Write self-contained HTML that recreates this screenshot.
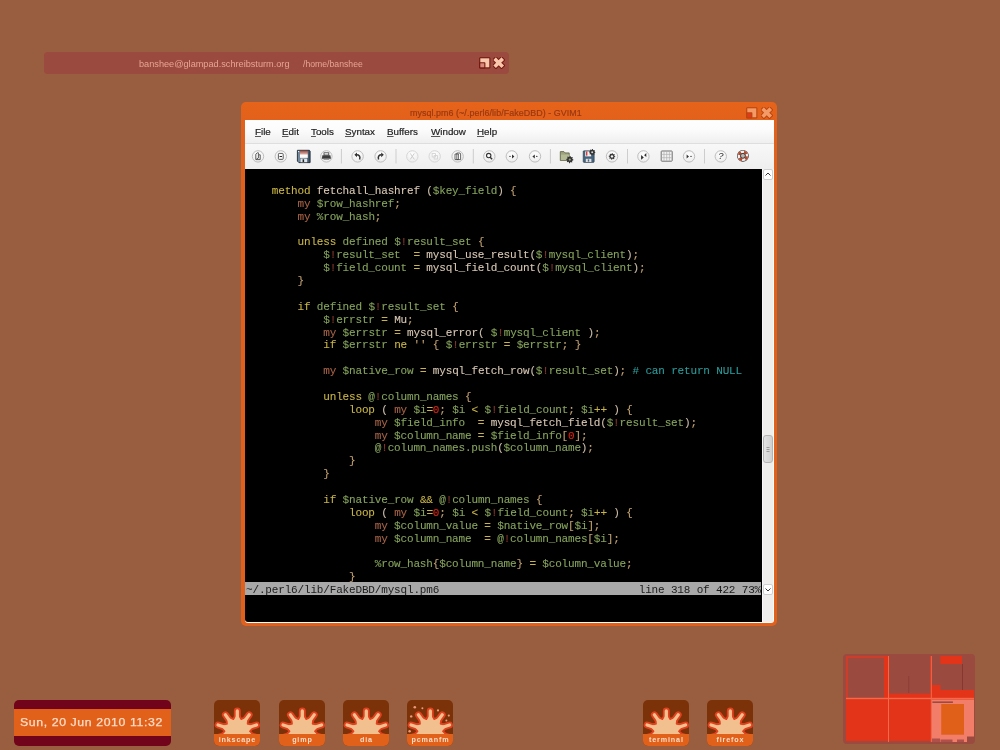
<!DOCTYPE html>
<html><head><meta charset="utf-8">
<style>
*{margin:0;padding:0;box-sizing:border-box}
html,body{width:1000px;height:750px;overflow:hidden;background:#995d3f;font-family:"Liberation Sans",sans-serif;position:relative}
.a{position:absolute}
#topbar{left:43.5px;top:52px;width:465.5px;height:21.5px;background:#9a4a3e;border-radius:4px}
.tt{position:absolute;top:9px;line-height:8px;font-size:8.2px;color:#e6a494;white-space:nowrap;transform-origin:0 0}
#win{left:241px;top:102px;width:536px;height:524px;background:linear-gradient(#e5631a,#e1601b 30px,#e1601b);border-radius:5px}
#title{left:168.5px;top:1px;line-height:20px;font-size:8.9px;letter-spacing:0.07px;color:#9a3812;-webkit-text-stroke:0.2px #9a3812;white-space:nowrap}
#client{left:245px;top:120px;width:529px;height:503px;background:#fdfdfd;border-radius:0 0 3px 3px;overflow:hidden}
.mi{position:absolute;top:126px;line-height:12px;font-size:9.8px;color:#1e1e1e;-webkit-text-stroke:0.2px #1e1e1e;white-space:nowrap}
.mi u{text-decoration:underline;text-decoration-color:#555;text-decoration-thickness:1px;text-underline-offset:1px}
#menusep{left:245px;top:143px;width:529px;height:1px;background:#dedede}
#toolbar{left:245px;top:144px;width:529px;height:25px;background:linear-gradient(#f8f8f8,#eeeeee)}
#editor{left:245px;top:169px;width:517px;height:453px;background:#000;overflow:hidden;border-bottom-left-radius:3px}
#sb{left:762px;top:169px;width:11px;height:453px;background:#efeeec;border-left:1px solid #f8f8f8}
pre{position:absolute;left:1px;top:2.8px;font-family:"Liberation Mono",monospace;font-size:11px;letter-spacing:-0.163px;line-height:12.875px;color:#e0d4c0;white-space:pre}
pre i{font-style:normal}
pre,.tt,#title,.mi,#clocktxt,.lab{will-change:transform}
#editor pre{-webkit-text-stroke:0.1px currentColor}
.y{color:#c9b546}.g{color:#86a35c}.b{color:#aa6446}.r{color:#86382a}.n{color:#e02414}.t{color:#c0a070}.w{color:#d8c8b4}.c{color:#2c9a9a}.z{color:#cbbcaa}
#status{left:245px;top:582px;width:516px;height:13px;background:#a9a9a9}
#status pre{top:1.8px;color:#1a1a1a}
.sbb{position:absolute;left:763px;width:10px;height:11px;background:#fff;border:1px solid #cfcfcf;border-radius:2px}
#thumb{left:763px;top:435px;width:10px;height:28px;border:1px solid #b4b4b4;border-radius:3px;background:linear-gradient(90deg,#e2e2e2,#d0d0d0)}
.tb{position:absolute;top:150px}
.sep{position:absolute;top:149px;width:1px;height:15px;background:#d4d4d4}
#clock{left:14px;top:700px;width:157px;height:46px;background:#71041a;border-radius:5px;overflow:hidden}
#clockband{left:14px;top:709px;width:157px;height:27px;background:#e1601a}
#clocktxt{left:20px;top:709px;line-height:27px;font-size:11px;letter-spacing:0.55px;color:#fbdcc6;white-space:nowrap;transform-origin:0 0;transform:scaleX(1.115);-webkit-text-stroke:0.25px #fbdcc6}
.ic{position:absolute;top:700px;width:46px;height:46px;border-radius:5px;overflow:hidden;background:#7c3208}
.ic .band{position:absolute;left:0;top:34px;width:46px;height:12px;background:#e1601a}
.ic .lab{position:absolute;left:0;top:34px;width:46px;line-height:12px;text-align:center;font-size:7.2px;font-weight:bold;color:#fbdcc6;letter-spacing:0.85px;text-indent:0.85px;white-space:nowrap}
.ic svg{position:absolute;left:0;top:0}
#pager{left:843.4px;top:653.7px;width:132px;height:90px;background:#9b4a40;border-radius:4px}
</style></head><body>
<div id="topbar" class="a">
  <span class="tt" style="left:95.5px;transform:scaleX(1.12)">banshee@glampad.schreibsturm.org</span>
  <span class="tt" style="left:259.5px;transform:scaleX(1.06)">/home/banshee</span>
  <svg class="a" style="left:435.8px;top:4.799999999999997px" width="12" height="12" viewBox="0 0 12 12"><rect x="0.2" y="0.2" width="11.2" height="11.2" rx="1.2" fill="#74180e"/><rect x="1.3" y="1.3" width="9" height="9" fill="#f9c8ac"/><rect x="0.2" y="5.2" width="6.2" height="6.2" rx="0.8" fill="#74180e"/><rect x="1.3" y="6.3" width="4" height="4" fill="#d98a7c"/></svg><svg class="a" style="left:449.8px;top:4.799999999999997px" width="12" height="12" viewBox="0 0 12 12"><path d="M2.9 2.9 L8.5 8.5 M8.5 2.9 L2.9 8.5" stroke="#74180e" stroke-width="5.6" stroke-linecap="square"/><path d="M2.9 2.9 L8.5 8.5 M8.5 2.9 L2.9 8.5" stroke="#f9c8ac" stroke-width="3.6" stroke-linecap="square"/></svg>
</div>
<div id="win" class="a">
  <div id="title" class="a">mysql.pm6 (~/.perl6/lib/FakeDBD) - GVIM1</div>
  <svg class="a" style="left:505.29999999999995px;top:5px" width="12" height="12" viewBox="0 0 12 12"><rect x="0.2" y="0.2" width="11.2" height="11.2" rx="1.2" fill="#b9460e"/><rect x="1.3" y="1.3" width="9" height="9" fill="#f49a66"/><rect x="0.2" y="5.2" width="6.2" height="6.2" rx="0.8" fill="#b9460e"/><rect x="1.3" y="6.3" width="4" height="4" fill="#e03a1a"/></svg><svg class="a" style="left:519.8px;top:5px" width="12" height="12" viewBox="0 0 12 12"><path d="M2.9 2.9 L8.5 8.5 M8.5 2.9 L2.9 8.5" stroke="#b9460e" stroke-width="5.6" stroke-linecap="square"/><path d="M2.9 2.9 L8.5 8.5 M8.5 2.9 L2.9 8.5" stroke="#f49a66" stroke-width="3.6" stroke-linecap="square"/></svg>
</div>
<div id="client" class="a"></div>
<div id="menubg" class="a" style="left:245px;top:120px;width:529px;height:23px;background:linear-gradient(#fefefe,#fcfcfc 40%,#efefef)"></div>
<span class="mi" style="left:255px"><u>F</u>ile</span>
<span class="mi" style="left:282px"><u>E</u>dit</span>
<span class="mi" style="left:311px"><u>T</u>ools</span>
<span class="mi" style="left:345px"><u>S</u>yntax</span>
<span class="mi" style="left:387px"><u>B</u>uffers</span>
<span class="mi" style="left:431px"><u>W</u>indow</span>
<span class="mi" style="left:477px"><u>H</u>elp</span>
<div id="menusep" class="a"></div>
<div id="toolbar" class="a"></div>
<svg class="a" style="left:0;top:0" width="1000" height="170" viewBox="0 0 1000 170"><defs><radialGradient id="cg" cx="0.5" cy="0.3" r="0.7"><stop offset="0" stop-color="#ffffff"/><stop offset="1" stop-color="#ececec"/></radialGradient><linearGradient id="fl" x1="0" y1="0" x2="0" y2="1"><stop offset="0" stop-color="#9c4a3c"/><stop offset="0.45" stop-color="#d8a8a0"/><stop offset="0.6" stop-color="#ffffff"/><stop offset="1" stop-color="#f4f4f4"/></linearGradient><linearGradient id="fb" x1="0" y1="0" x2="1" y2="0"><stop offset="0" stop-color="#7a90a2"/><stop offset="1" stop-color="#3e5266"/></linearGradient></defs><circle cx="258" cy="156.4" r="5.7" fill="url(#cg)" stroke="#bdbdbd" stroke-width="1"/><path d="M255.8 154.20000000000002 L257.4 152.8 L258.4 152.8 L258.4 154.8 L260.2 154.8 L260.2 159.6 L255.8 159.6 Z M258.4 154.8 L258.4 158.0 L256.4 159.20000000000002" fill="none" stroke="#4a4a4a" stroke-width="0.9"/><circle cx="280.8" cy="156.4" r="5.7" fill="url(#cg)" stroke="#bdbdbd" stroke-width="1"/><rect x="278.40000000000003" y="153.4" width="4.8" height="6" rx="0.8" fill="none" stroke="#4a4a4a" stroke-width="0.9"/><rect x="279.6" y="156.0" width="2.4" height="1" fill="#222"/><path d="M297.4 150.3 h12.0 l0.7 0.8 v11.5 h-11.2 l-1.5 -1.5 z" fill="url(#fb)" stroke="#1c2632" stroke-width="0.9"/><rect x="300.0" y="150.7" width="7.8" height="7.2" fill="url(#fl)"/><rect x="300.6" y="158.6" width="6.6" height="3.6" fill="#dfe4e8"/><rect x="302.6" y="159.3" width="1.5" height="2.7" fill="#222"/><circle cx="298.6" cy="151.5" r="0.6" fill="#fff"/><circle cx="326.4" cy="156.4" r="5.7" fill="url(#cg)" stroke="#bdbdbd" stroke-width="1"/><rect x="324.0" y="152.8" width="4.8" height="2.2" fill="#fff" stroke="#3a3a3a" stroke-width="0.8"/><path d="M322.4 155.20000000000002 h8 l0.6 3.6 h-9.2z" fill="#3c3c3c"/><rect x="323.59999999999997" y="158.8" width="5.6" height="1" fill="#8a8a8a"/><rect x="340.9" y="149" width="1" height="14.5" fill="#cdcdcd"/><circle cx="357.6" cy="156.4" r="5.7" fill="url(#cg)" stroke="#bdbdbd" stroke-width="1"/><path d="M359.6 159.4 C360.6 156.4 359.1 154.8 356.6 154.8" fill="none" stroke="#333" stroke-width="1.5"/><path d="M354.40000000000003 154.8 L357.0 152.4 L357.0 157.20000000000002Z" fill="#333"/><circle cx="380.6" cy="156.4" r="5.7" fill="url(#cg)" stroke="#bdbdbd" stroke-width="1"/><path d="M378.6 159.4 C377.6 156.4 379.1 154.8 381.6 154.8" fill="none" stroke="#333" stroke-width="1.5"/><path d="M383.8 154.8 L381.20000000000005 152.4 L381.20000000000005 157.20000000000002Z" fill="#333"/><rect x="395.5" y="149" width="1" height="14.5" fill="#cdcdcd"/><circle cx="412.3" cy="156.4" r="5.7" fill="url(#cg)" stroke="#d6d6d6" stroke-width="1"/><path d="M410.3 153.4 L414.3 159.4 M414.3 153.4 L410.3 159.4" stroke="#c8c8c8" stroke-width="0.9"/><circle cx="434.7" cy="156.4" r="5.7" fill="url(#cg)" stroke="#d6d6d6" stroke-width="1"/><rect x="432.09999999999997" y="153.6" width="3.4" height="3.4" fill="none" stroke="#cfcfcf" stroke-width="0.8"/><rect x="434.09999999999997" y="155.6" width="3.4" height="3.4" fill="none" stroke="#cfcfcf" stroke-width="0.8"/><circle cx="457.6" cy="156.4" r="5.7" fill="url(#cg)" stroke="#bdbdbd" stroke-width="1"/><path d="M455.0 154.0 h3.4 v5.6 h-3.4z M456.8 153.0 h3.2 l0.6 1 v5.6 h-3.8z" fill="#fff" stroke="#444" stroke-width="0.8"/><rect x="472.8" y="149" width="1" height="14.5" fill="#cdcdcd"/><circle cx="489.3" cy="156.4" r="5.7" fill="url(#cg)" stroke="#bdbdbd" stroke-width="1"/><circle cx="488.7" cy="155.6" r="2.2" fill="none" stroke="#333" stroke-width="1.1"/><path d="M490.2 157.20000000000002 L492.1 159.20000000000002" stroke="#333" stroke-width="1.4"/><circle cx="511.8" cy="156.4" r="5.7" fill="url(#cg)" stroke="#bdbdbd" stroke-width="1"/><circle cx="510.0" cy="156.4" r="0.7" fill="#333"/><path d="M512.0 154.4 L514.4 156.4 L512.0 158.4Z" fill="#333"/><circle cx="535" cy="156.4" r="5.7" fill="url(#cg)" stroke="#bdbdbd" stroke-width="1"/><circle cx="536.8" cy="156.4" r="0.7" fill="#333"/><path d="M534.8 154.4 L532.4 156.4 L534.8 158.4Z" fill="#333"/><rect x="549.9" y="149" width="1" height="14.5" fill="#cdcdcd"/><path d="M560.3 151.6 h3.6 l1.1 1.3 h4.2 v7.6 h-8.9z" fill="#9ea47e" stroke="#5e6044" stroke-width="0.8"/><path d="M561 154.6 h8 v5.5 h-8z" fill="#b4ba94"/><path d="M573.40 159.60 L573.33 160.30 L572.29 160.63 L572.04 161.10 L572.35 162.15 L571.80 162.59 L570.83 162.09 L570.33 162.25 L569.80 163.20 L569.10 163.13 L568.77 162.09 L568.30 161.84 L567.25 162.15 L566.81 161.60 L567.31 160.63 L567.15 160.13 L566.20 159.60 L566.27 158.90 L567.31 158.57 L567.56 158.10 L567.25 157.05 L567.80 156.61 L568.77 157.11 L569.27 156.95 L569.80 156.00 L570.50 156.07 L570.83 157.11 L571.30 157.36 L572.35 157.05 L572.79 157.60 L572.29 158.57 L572.45 159.07Z" fill="#333"/><circle cx="569.8" cy="159.6" r="1.1" fill="#9ea47e"/><rect x="583.2" y="150.8" width="11" height="11.6" rx="0.8" fill="#44627c" stroke="#2a3a4a" stroke-width="0.6"/><rect x="585.2" y="151.4" width="6" height="5" fill="#f4eeee"/><rect x="586" y="151.4" width="1.4" height="4.2" fill="#d04040"/><rect x="585.8" y="158.8" width="5.6" height="3.2" fill="#e0e0e0"/><rect x="587.8" y="159.4" width="1.4" height="2.2" fill="#44627c"/><path d="M595.40 152.20 L595.34 152.82 L594.42 153.12 L594.20 153.53 L594.46 154.46 L593.98 154.86 L593.12 154.42 L592.67 154.55 L592.20 155.40 L591.58 155.34 L591.28 154.42 L590.87 154.20 L589.94 154.46 L589.54 153.98 L589.98 153.12 L589.85 152.67 L589.00 152.20 L589.06 151.58 L589.98 151.28 L590.20 150.87 L589.94 149.94 L590.42 149.54 L591.28 149.98 L591.73 149.85 L592.20 149.00 L592.82 149.06 L593.12 149.98 L593.53 150.20 L594.46 149.94 L594.86 150.42 L594.42 151.28 L594.55 151.73Z" fill="#333"/><circle cx="592.2" cy="152.2" r="1.0" fill="#cfd6dc"/><circle cx="612" cy="156.4" r="5.7" fill="url(#cg)" stroke="#bdbdbd" stroke-width="1"/><path d="M615.30 156.40 L615.24 157.04 L614.31 157.36 L614.08 157.79 L614.33 158.73 L613.83 159.14 L612.96 158.71 L612.49 158.85 L612.00 159.70 L611.36 159.64 L611.04 158.71 L610.61 158.48 L609.67 158.73 L609.26 158.23 L609.69 157.36 L609.55 156.89 L608.70 156.40 L608.76 155.76 L609.69 155.44 L609.92 155.01 L609.67 154.07 L610.17 153.66 L611.04 154.09 L611.51 153.95 L612.00 153.10 L612.64 153.16 L612.96 154.09 L613.39 154.32 L614.33 154.07 L614.74 154.57 L614.31 155.44 L614.45 155.91Z" fill="#3a3a3a"/><circle cx="612" cy="156.4" r="1.2" fill="#f6f6f6"/><rect x="627.0" y="149" width="1" height="14.5" fill="#cdcdcd"/><circle cx="643.4" cy="156.4" r="5.7" fill="url(#cg)" stroke="#bdbdbd" stroke-width="1"/><path d="M641.1 154.9 L643.8 157.4 L641.1 159.8 Z M646.3 153.0 L644.1 155.3 L646.3 157.1 Z" fill="#2e2e2e"/><rect x="661.2" y="151" width="11" height="10.2" rx="0.6" fill="#f2f2f2" stroke="#6e6e6e" stroke-width="1"/><path d="M664 151.5 v9.4 M666.7 151.5 v9.4 M669.4 151.5 v9.4 M661.7 154.4 h10 M661.7 157.7 h10" stroke="#b0b0b0" stroke-width="0.7"/><circle cx="689" cy="156.4" r="5.7" fill="url(#cg)" stroke="#bdbdbd" stroke-width="1"/><path d="M686.6 154.4 L689 156.4 L686.6 158.4Z" fill="#333"/><circle cx="691" cy="156.4" r="0.7" fill="#333"/><rect x="704.0" y="149" width="1" height="14.5" fill="#cdcdcd"/><circle cx="720.8" cy="156.4" r="5.7" fill="url(#cg)" stroke="#bdbdbd" stroke-width="1"/><text x="720.8" y="159.3" text-anchor="middle" font-family="Liberation Sans" font-size="9.5" font-style="italic" fill="#2a2a2a">?</text><circle cx="742.9" cy="155.8" r="5.9" fill="#2e2e2e"/><circle cx="742.9" cy="155.8" r="4.0" fill="none" stroke="#f4f0ee" stroke-width="2.6"/><circle cx="742.9" cy="155.8" r="4.0" fill="none" stroke="#b8482a" stroke-width="2.6" stroke-dasharray="3.1 3.2" stroke-dashoffset="-0.6"/><circle cx="742.9" cy="155.8" r="2.4" fill="#b8b4b0" stroke="#2e2e2e" stroke-width="0.7"/></svg>
<div id="editor" class="a">
<pre>

    <i class="y">method</i> <i class="w">fetchall_hashref</i> <i class="z">(</i><i class="g">$</i><i class="g">key_field</i><i class="z">)</i> <i class="t">{</i>
        <i class="b">my</i> <i class="g">$</i><i class="g">row_hashref</i><i class="t">;</i>
        <i class="b">my</i> <i class="g">%</i><i class="g">row_hash</i><i class="t">;</i>

        <i class="y">unless</i> <i class="g">defined</i> <i class="g">$</i><i class="r">!</i><i class="g">result_set</i> <i class="t">{</i>
            <i class="g">$</i><i class="r">!</i><i class="g">result_set</i>  <i class="y">=</i> <i class="w">mysql_use_result</i><i class="z">(</i><i class="g">$</i><i class="r">!</i><i class="g">mysql_client</i><i class="z">)</i><i class="t">;</i>
            <i class="g">$</i><i class="r">!</i><i class="g">field_count</i> <i class="y">=</i> <i class="w">mysql_field_count</i><i class="z">(</i><i class="g">$</i><i class="r">!</i><i class="g">mysql_client</i><i class="z">)</i><i class="t">;</i>
        <i class="t">}</i>

        <i class="y">if</i> <i class="g">defined</i> <i class="g">$</i><i class="r">!</i><i class="g">result_set</i> <i class="t">{</i>
            <i class="g">$</i><i class="r">!</i><i class="g">errstr</i> <i class="y">=</i> <i class="w">Mu</i><i class="t">;</i>
            <i class="b">my</i> <i class="g">$</i><i class="g">errstr</i> <i class="y">=</i> <i class="w">mysql_error</i><i class="z">(</i> <i class="g">$</i><i class="r">!</i><i class="g">mysql_client</i> <i class="z">)</i><i class="t">;</i>
            <i class="y">if</i> <i class="g">$</i><i class="g">errstr</i> <i class="y">ne</i> <i class="t">''</i> <i class="t">{</i> <i class="g">$</i><i class="r">!</i><i class="g">errstr</i> <i class="y">=</i> <i class="g">$</i><i class="g">errstr</i><i class="t">;</i> <i class="t">}</i>

            <i class="b">my</i> <i class="g">$</i><i class="g">native_row</i> <i class="y">=</i> <i class="w">mysql_fetch_row</i><i class="z">(</i><i class="g">$</i><i class="r">!</i><i class="g">result_set</i><i class="z">)</i><i class="t">;</i> <i class="c"># can return NULL</i>

            <i class="y">unless</i> <i class="g">@</i><i class="r">!</i><i class="g">column_names</i> <i class="t">{</i>
                <i class="y">loop</i> <i class="z">(</i> <i class="b">my</i> <i class="g">$</i><i class="g">i</i><i class="y">=</i><i class="n">0</i><i class="t">;</i> <i class="g">$</i><i class="g">i</i> <i class="y">&lt;</i> <i class="g">$</i><i class="r">!</i><i class="g">field_count</i><i class="t">;</i> <i class="g">$</i><i class="g">i</i><i class="y">++</i> <i class="z">)</i> <i class="t">{</i>
                    <i class="b">my</i> <i class="g">$</i><i class="g">field_info</i>  <i class="y">=</i> <i class="w">mysql_fetch_field</i><i class="z">(</i><i class="g">$</i><i class="r">!</i><i class="g">result_set</i><i class="z">)</i><i class="t">;</i>
                    <i class="b">my</i> <i class="g">$</i><i class="g">column_name</i> <i class="y">=</i> <i class="g">$</i><i class="g">field_info</i><i class="t">[</i><i class="n">0</i><i class="t">]</i><i class="t">;</i>
                    <i class="g">@</i><i class="r">!</i><i class="g">column_names.push</i><i class="z">(</i><i class="g">$</i><i class="g">column_name</i><i class="z">)</i><i class="t">;</i>
                <i class="t">}</i>
            <i class="t">}</i>

            <i class="y">if</i> <i class="g">$</i><i class="g">native_row</i> <i class="y">&amp;&amp;</i> <i class="g">@</i><i class="r">!</i><i class="g">column_names</i> <i class="t">{</i>
                <i class="y">loop</i> <i class="z">(</i> <i class="b">my</i> <i class="g">$</i><i class="g">i</i><i class="y">=</i><i class="n">0</i><i class="t">;</i> <i class="g">$</i><i class="g">i</i> <i class="y">&lt;</i> <i class="g">$</i><i class="r">!</i><i class="g">field_count</i><i class="t">;</i> <i class="g">$</i><i class="g">i</i><i class="y">++</i> <i class="z">)</i> <i class="t">{</i>
                    <i class="b">my</i> <i class="g">$</i><i class="g">column_value</i> <i class="y">=</i> <i class="g">$</i><i class="g">native_row</i><i class="t">[</i><i class="g">$</i><i class="g">i</i><i class="t">]</i><i class="t">;</i>
                    <i class="b">my</i> <i class="g">$</i><i class="g">column_name</i>  <i class="y">=</i> <i class="g">@</i><i class="r">!</i><i class="g">column_names</i><i class="t">[</i><i class="g">$</i><i class="g">i</i><i class="t">]</i><i class="t">;</i>

                    <i class="g">%</i><i class="g">row_hash</i><i class="t">{</i><i class="g">$</i><i class="g">column_name</i><i class="t">}</i> <i class="y">=</i> <i class="g">$</i><i class="g">column_value</i><i class="t">;</i>
                <i class="t">}</i></pre>
</div>
<div id="status" class="a"><pre>~/.perl6/lib/FakeDBD/mysql.pm6                               line 318 of 422 73%</pre></div>
<div id="sb" class="a"></div>
<div class="sbb" style="top:169px"><svg width="8" height="9" style="position:absolute;left:0;top:0"><path d="M1.5 5.5 L4 3 L6.5 5.5" fill="none" stroke="#3a3a3a" stroke-width="1"/></svg></div>
<div id="thumb" class="a"><svg width="8" height="26" style="position:absolute;left:0;top:0"><path d="M2.5 11.5 h3 M2.5 13.5 h3 M2.5 15.5 h3" stroke="#9a9a9a" stroke-width="1"/></svg></div>
<div class="sbb" style="top:584px"><svg width="8" height="9" style="position:absolute;left:0;top:0"><path d="M1.5 3.5 L4 6 L6.5 3.5" fill="none" stroke="#3a3a3a" stroke-width="1"/></svg></div>

<div id="clock" class="a"></div>
<div id="clockband" class="a"></div>
<div id="clocktxt" class="a">Sun, 20 Jun 2010 11:32</div>
<div class="ic" style="left:214px"><svg width="46" height="46" viewBox="0 0 46 46"><circle cx="23.3" cy="31.2" r="13.4" fill="#e2401e"/><path d="M23.30 31.20 L23.30 11.00 M23.30 31.20 L35.17 14.86 M23.30 31.20 L42.51 24.96 M23.30 31.20 L42.51 37.44 M23.30 31.20 L35.17 47.54 M23.30 31.20 L23.30 51.40 M23.30 31.20 L11.43 47.54 M23.30 31.20 L4.09 37.44 M23.30 31.20 L4.09 24.96 M23.30 31.20 L11.43 14.86 " stroke="#e2401e" stroke-width="6.9" stroke-linecap="round"/><path d="M23.30 14.00 L26.88 20.17 L33.41 17.28 L32.68 24.38 L39.66 25.88 L34.90 31.20 L39.66 36.52 L32.68 38.02 L33.41 45.12 L26.88 42.23 L23.30 48.40 L19.72 42.23 L13.19 45.12 L13.92 38.02 L6.94 36.52 L11.70 31.20 L6.94 25.88 L13.92 24.38 L13.19 17.28 L19.72 20.17Z" fill="#e2401e" stroke="#e2401e" stroke-width="3.61" stroke-linejoin="round"/><circle cx="23.3" cy="31.2" r="11.6" fill="#f2c08e"/><path d="M23.30 31.20 L23.30 11.00 M23.30 31.20 L35.17 14.86 M23.30 31.20 L42.51 24.96 M23.30 31.20 L42.51 37.44 M23.30 31.20 L35.17 47.54 M23.30 31.20 L23.30 51.40 M23.30 31.20 L11.43 47.54 M23.30 31.20 L4.09 37.44 M23.30 31.20 L4.09 24.96 M23.30 31.20 L11.43 14.86 " stroke="#f2c08e" stroke-width="3.3" stroke-linecap="round"/><path d="M23.30 14.00 L26.88 20.17 L33.41 17.28 L32.68 24.38 L39.66 25.88 L34.90 31.20 L39.66 36.52 L32.68 38.02 L33.41 45.12 L26.88 42.23 L23.30 48.40 L19.72 42.23 L13.19 45.12 L13.92 38.02 L6.94 36.52 L11.70 31.20 L6.94 25.88 L13.92 24.38 L13.19 17.28 L19.72 20.17Z" fill="#f2c08e" stroke="#f2c08e" stroke-width="0.01" stroke-linejoin="round"/></svg><div class="band"></div><div class="lab">inkscape</div></div>
<div class="ic" style="left:278.5px"><svg width="46" height="46" viewBox="0 0 46 46"><circle cx="23.3" cy="31.2" r="13.4" fill="#e2401e"/><path d="M23.30 31.20 L23.30 11.00 M23.30 31.20 L35.17 14.86 M23.30 31.20 L42.51 24.96 M23.30 31.20 L42.51 37.44 M23.30 31.20 L35.17 47.54 M23.30 31.20 L23.30 51.40 M23.30 31.20 L11.43 47.54 M23.30 31.20 L4.09 37.44 M23.30 31.20 L4.09 24.96 M23.30 31.20 L11.43 14.86 " stroke="#e2401e" stroke-width="6.9" stroke-linecap="round"/><path d="M23.30 14.00 L26.88 20.17 L33.41 17.28 L32.68 24.38 L39.66 25.88 L34.90 31.20 L39.66 36.52 L32.68 38.02 L33.41 45.12 L26.88 42.23 L23.30 48.40 L19.72 42.23 L13.19 45.12 L13.92 38.02 L6.94 36.52 L11.70 31.20 L6.94 25.88 L13.92 24.38 L13.19 17.28 L19.72 20.17Z" fill="#e2401e" stroke="#e2401e" stroke-width="3.61" stroke-linejoin="round"/><circle cx="23.3" cy="31.2" r="11.6" fill="#f2c08e"/><path d="M23.30 31.20 L23.30 11.00 M23.30 31.20 L35.17 14.86 M23.30 31.20 L42.51 24.96 M23.30 31.20 L42.51 37.44 M23.30 31.20 L35.17 47.54 M23.30 31.20 L23.30 51.40 M23.30 31.20 L11.43 47.54 M23.30 31.20 L4.09 37.44 M23.30 31.20 L4.09 24.96 M23.30 31.20 L11.43 14.86 " stroke="#f2c08e" stroke-width="3.3" stroke-linecap="round"/><path d="M23.30 14.00 L26.88 20.17 L33.41 17.28 L32.68 24.38 L39.66 25.88 L34.90 31.20 L39.66 36.52 L32.68 38.02 L33.41 45.12 L26.88 42.23 L23.30 48.40 L19.72 42.23 L13.19 45.12 L13.92 38.02 L6.94 36.52 L11.70 31.20 L6.94 25.88 L13.92 24.38 L13.19 17.28 L19.72 20.17Z" fill="#f2c08e" stroke="#f2c08e" stroke-width="0.01" stroke-linejoin="round"/></svg><div class="band"></div><div class="lab">gimp</div></div>
<div class="ic" style="left:343px"><svg width="46" height="46" viewBox="0 0 46 46"><circle cx="23.3" cy="31.2" r="13.4" fill="#e2401e"/><path d="M23.30 31.20 L23.30 11.00 M23.30 31.20 L35.17 14.86 M23.30 31.20 L42.51 24.96 M23.30 31.20 L42.51 37.44 M23.30 31.20 L35.17 47.54 M23.30 31.20 L23.30 51.40 M23.30 31.20 L11.43 47.54 M23.30 31.20 L4.09 37.44 M23.30 31.20 L4.09 24.96 M23.30 31.20 L11.43 14.86 " stroke="#e2401e" stroke-width="6.9" stroke-linecap="round"/><path d="M23.30 14.00 L26.88 20.17 L33.41 17.28 L32.68 24.38 L39.66 25.88 L34.90 31.20 L39.66 36.52 L32.68 38.02 L33.41 45.12 L26.88 42.23 L23.30 48.40 L19.72 42.23 L13.19 45.12 L13.92 38.02 L6.94 36.52 L11.70 31.20 L6.94 25.88 L13.92 24.38 L13.19 17.28 L19.72 20.17Z" fill="#e2401e" stroke="#e2401e" stroke-width="3.61" stroke-linejoin="round"/><circle cx="23.3" cy="31.2" r="11.6" fill="#f2c08e"/><path d="M23.30 31.20 L23.30 11.00 M23.30 31.20 L35.17 14.86 M23.30 31.20 L42.51 24.96 M23.30 31.20 L42.51 37.44 M23.30 31.20 L35.17 47.54 M23.30 31.20 L23.30 51.40 M23.30 31.20 L11.43 47.54 M23.30 31.20 L4.09 37.44 M23.30 31.20 L4.09 24.96 M23.30 31.20 L11.43 14.86 " stroke="#f2c08e" stroke-width="3.3" stroke-linecap="round"/><path d="M23.30 14.00 L26.88 20.17 L33.41 17.28 L32.68 24.38 L39.66 25.88 L34.90 31.20 L39.66 36.52 L32.68 38.02 L33.41 45.12 L26.88 42.23 L23.30 48.40 L19.72 42.23 L13.19 45.12 L13.92 38.02 L6.94 36.52 L11.70 31.20 L6.94 25.88 L13.92 24.38 L13.19 17.28 L19.72 20.17Z" fill="#f2c08e" stroke="#f2c08e" stroke-width="0.01" stroke-linejoin="round"/></svg><div class="band"></div><div class="lab">dia</div></div>
<div class="ic" style="left:407px"><svg width="46" height="46" viewBox="0 0 46 46"><circle cx="7.8" cy="7.2" r="1.3" fill="#ee9a78"/><circle cx="15.4" cy="8.2" r="1.0" fill="#ee9a78"/><circle cx="31" cy="10.4" r="1.1" fill="#ee9a78"/><circle cx="4.2" cy="16.4" r="1.2" fill="#ee9a78"/><circle cx="41.8" cy="15.6" r="1.1" fill="#ee9a78"/><circle cx="39.4" cy="20.4" r="1.0" fill="#ee9a78"/><circle cx="2.6" cy="31.2" r="1.2" fill="#ee9a78"/><circle cx="23.3" cy="31.2" r="13.4" fill="#e2401e"/><path d="M23.30 31.20 L23.30 11.00 M23.30 31.20 L35.17 14.86 M23.30 31.20 L42.51 24.96 M23.30 31.20 L42.51 37.44 M23.30 31.20 L35.17 47.54 M23.30 31.20 L23.30 51.40 M23.30 31.20 L11.43 47.54 M23.30 31.20 L4.09 37.44 M23.30 31.20 L4.09 24.96 M23.30 31.20 L11.43 14.86 " stroke="#e2401e" stroke-width="6.9" stroke-linecap="round"/><path d="M23.30 14.00 L26.88 20.17 L33.41 17.28 L32.68 24.38 L39.66 25.88 L34.90 31.20 L39.66 36.52 L32.68 38.02 L33.41 45.12 L26.88 42.23 L23.30 48.40 L19.72 42.23 L13.19 45.12 L13.92 38.02 L6.94 36.52 L11.70 31.20 L6.94 25.88 L13.92 24.38 L13.19 17.28 L19.72 20.17Z" fill="#e2401e" stroke="#e2401e" stroke-width="3.61" stroke-linejoin="round"/><circle cx="23.3" cy="31.2" r="11.6" fill="#f2c08e"/><path d="M23.30 31.20 L23.30 11.00 M23.30 31.20 L35.17 14.86 M23.30 31.20 L42.51 24.96 M23.30 31.20 L42.51 37.44 M23.30 31.20 L35.17 47.54 M23.30 31.20 L23.30 51.40 M23.30 31.20 L11.43 47.54 M23.30 31.20 L4.09 37.44 M23.30 31.20 L4.09 24.96 M23.30 31.20 L11.43 14.86 " stroke="#f2c08e" stroke-width="3.3" stroke-linecap="round"/><path d="M23.30 14.00 L26.88 20.17 L33.41 17.28 L32.68 24.38 L39.66 25.88 L34.90 31.20 L39.66 36.52 L32.68 38.02 L33.41 45.12 L26.88 42.23 L23.30 48.40 L19.72 42.23 L13.19 45.12 L13.92 38.02 L6.94 36.52 L11.70 31.20 L6.94 25.88 L13.92 24.38 L13.19 17.28 L19.72 20.17Z" fill="#f2c08e" stroke="#f2c08e" stroke-width="0.01" stroke-linejoin="round"/></svg><div class="band"></div><div class="lab">pcmanfm</div></div>
<div class="ic" style="left:643px"><svg width="46" height="46" viewBox="0 0 46 46"><circle cx="23.3" cy="31.2" r="13.4" fill="#e2401e"/><path d="M23.30 31.20 L23.30 11.00 M23.30 31.20 L35.17 14.86 M23.30 31.20 L42.51 24.96 M23.30 31.20 L42.51 37.44 M23.30 31.20 L35.17 47.54 M23.30 31.20 L23.30 51.40 M23.30 31.20 L11.43 47.54 M23.30 31.20 L4.09 37.44 M23.30 31.20 L4.09 24.96 M23.30 31.20 L11.43 14.86 " stroke="#e2401e" stroke-width="6.9" stroke-linecap="round"/><path d="M23.30 14.00 L26.88 20.17 L33.41 17.28 L32.68 24.38 L39.66 25.88 L34.90 31.20 L39.66 36.52 L32.68 38.02 L33.41 45.12 L26.88 42.23 L23.30 48.40 L19.72 42.23 L13.19 45.12 L13.92 38.02 L6.94 36.52 L11.70 31.20 L6.94 25.88 L13.92 24.38 L13.19 17.28 L19.72 20.17Z" fill="#e2401e" stroke="#e2401e" stroke-width="3.61" stroke-linejoin="round"/><circle cx="23.3" cy="31.2" r="11.6" fill="#f2c08e"/><path d="M23.30 31.20 L23.30 11.00 M23.30 31.20 L35.17 14.86 M23.30 31.20 L42.51 24.96 M23.30 31.20 L42.51 37.44 M23.30 31.20 L35.17 47.54 M23.30 31.20 L23.30 51.40 M23.30 31.20 L11.43 47.54 M23.30 31.20 L4.09 37.44 M23.30 31.20 L4.09 24.96 M23.30 31.20 L11.43 14.86 " stroke="#f2c08e" stroke-width="3.3" stroke-linecap="round"/><path d="M23.30 14.00 L26.88 20.17 L33.41 17.28 L32.68 24.38 L39.66 25.88 L34.90 31.20 L39.66 36.52 L32.68 38.02 L33.41 45.12 L26.88 42.23 L23.30 48.40 L19.72 42.23 L13.19 45.12 L13.92 38.02 L6.94 36.52 L11.70 31.20 L6.94 25.88 L13.92 24.38 L13.19 17.28 L19.72 20.17Z" fill="#f2c08e" stroke="#f2c08e" stroke-width="0.01" stroke-linejoin="round"/></svg><div class="band"></div><div class="lab">terminal</div></div>
<div class="ic" style="left:707px"><svg width="46" height="46" viewBox="0 0 46 46"><circle cx="23.3" cy="31.2" r="13.4" fill="#e2401e"/><path d="M23.30 31.20 L23.30 11.00 M23.30 31.20 L35.17 14.86 M23.30 31.20 L42.51 24.96 M23.30 31.20 L42.51 37.44 M23.30 31.20 L35.17 47.54 M23.30 31.20 L23.30 51.40 M23.30 31.20 L11.43 47.54 M23.30 31.20 L4.09 37.44 M23.30 31.20 L4.09 24.96 M23.30 31.20 L11.43 14.86 " stroke="#e2401e" stroke-width="6.9" stroke-linecap="round"/><path d="M23.30 14.00 L26.88 20.17 L33.41 17.28 L32.68 24.38 L39.66 25.88 L34.90 31.20 L39.66 36.52 L32.68 38.02 L33.41 45.12 L26.88 42.23 L23.30 48.40 L19.72 42.23 L13.19 45.12 L13.92 38.02 L6.94 36.52 L11.70 31.20 L6.94 25.88 L13.92 24.38 L13.19 17.28 L19.72 20.17Z" fill="#e2401e" stroke="#e2401e" stroke-width="3.61" stroke-linejoin="round"/><circle cx="23.3" cy="31.2" r="11.6" fill="#f2c08e"/><path d="M23.30 31.20 L23.30 11.00 M23.30 31.20 L35.17 14.86 M23.30 31.20 L42.51 24.96 M23.30 31.20 L42.51 37.44 M23.30 31.20 L35.17 47.54 M23.30 31.20 L23.30 51.40 M23.30 31.20 L11.43 47.54 M23.30 31.20 L4.09 37.44 M23.30 31.20 L4.09 24.96 M23.30 31.20 L11.43 14.86 " stroke="#f2c08e" stroke-width="3.3" stroke-linecap="round"/><path d="M23.30 14.00 L26.88 20.17 L33.41 17.28 L32.68 24.38 L39.66 25.88 L34.90 31.20 L39.66 36.52 L32.68 38.02 L33.41 45.12 L26.88 42.23 L23.30 48.40 L19.72 42.23 L13.19 45.12 L13.92 38.02 L6.94 36.52 L11.70 31.20 L6.94 25.88 L13.92 24.38 L13.19 17.28 L19.72 20.17Z" fill="#f2c08e" stroke="#f2c08e" stroke-width="0.01" stroke-linejoin="round"/></svg><div class="band"></div><div class="lab">firefox</div></div>
<div id="pager" class="a"></div>
<svg class="a" style="left:830px;top:640px" width="160" height="110" viewBox="830 640 160 110">
<rect x="846" y="656" width="128" height="85" fill="#e3341a"/>
<rect x="846" y="656" width="42" height="42" fill="#cc3e2a"/>
<!-- top-left cell inner -->
<rect x="848.1" y="658.1" width="36" height="39.6" fill="#9b4a40"/>
<rect x="884.1" y="656" width="4" height="42" fill="#e3341a"/>
<!-- top-middle -->
<rect x="889.2" y="656" width="41" height="37.6" fill="#9b4a40"/>
<rect x="908.4" y="676" width="0.8" height="17" fill="#8a3a34"/>
<!-- top-right -->
<rect x="931.5" y="656" width="42.5" height="34" fill="#9b4a40"/>
<rect x="940.4" y="656" width="21.6" height="8" fill="#e3341a"/>
<rect x="931.5" y="685" width="9" height="5" fill="#e3341a"/>
<rect x="962" y="664" width="0.9" height="26" fill="#86362e"/>
<!-- bottom right -->
<rect x="931.5" y="699.5" width="42.5" height="42.5" fill="#f27e6a"/>
<rect x="941.2" y="704" width="22.8" height="30.7" fill="#e0601a"/>
<rect x="932.4" y="701.4" width="20.5" height="1.6" fill="#9b4a40"/>
<rect x="932" y="738.5" width="8" height="3.5" fill="#b0504a"/>
<rect x="940.5" y="739.5" width="12" height="2.5" fill="#b0504a"/>
<rect x="957" y="739.5" width="7" height="2.5" fill="#b0504a"/>
<rect x="967" y="736.5" width="7" height="5.5" fill="#9b4a40"/>
<!-- grid lines -->
<rect x="888" y="656" width="1" height="86" fill="#f26a4c"/>
<rect x="930.8" y="656" width="1" height="86" fill="#f26a4c"/>
<rect x="846" y="697.8" width="128" height="1.4" fill="#f26a4c"/>
</svg>

</body></html>
